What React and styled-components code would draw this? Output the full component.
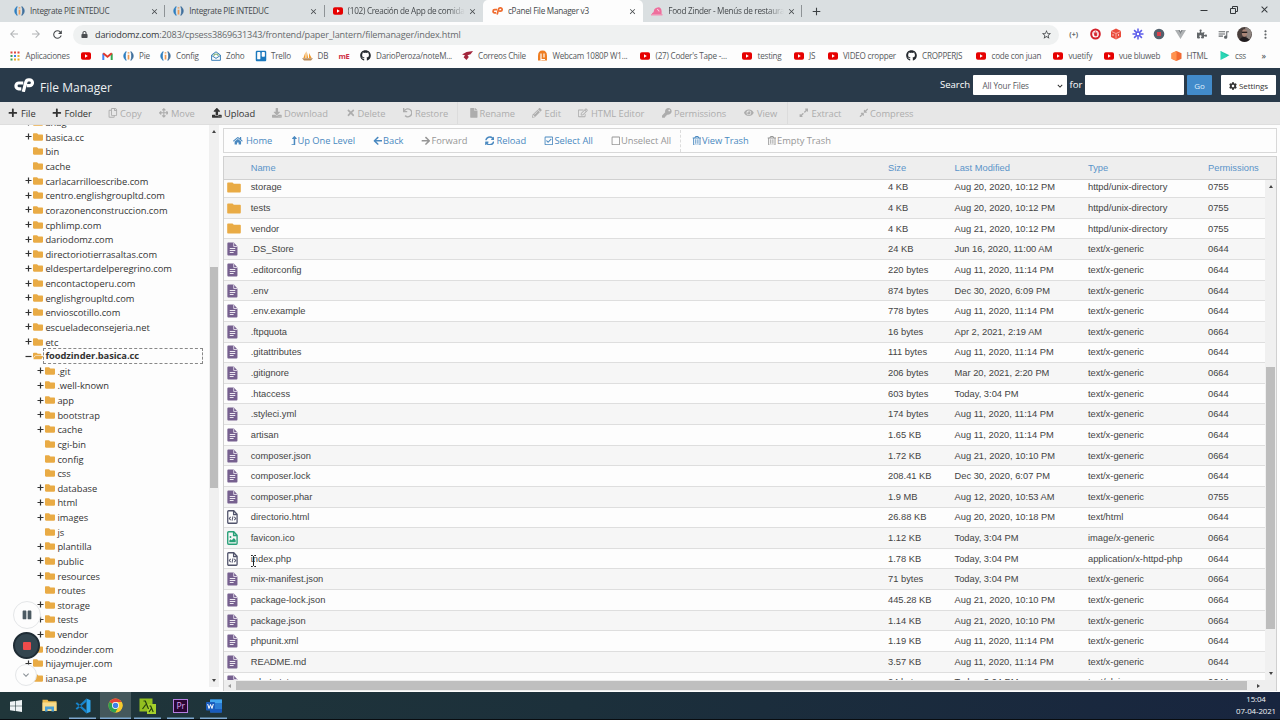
import React from "react";
import styled, { createGlobalStyle, css } from "styled-components";
import {
  FaPlus,
  FaRegCopy,
  FaArrowsAlt,
  FaUpload,
  FaDownload,
  FaTimes,
  FaUndo,
  FaFile,
  FaPencilAlt,
  FaRegEdit,
  FaKey,
  FaEye,
  FaExpandAlt,
  FaCompressAlt,
  FaHome,
  FaLevelUpAlt,
  FaArrowLeft,
  FaArrowRight,
  FaSyncAlt,
  FaRegCheckSquare,
  FaRegSquare,
  FaRegTrashAlt,
  FaCog,
  FaFolder,
  FaFolderOpen,
  FaLock,
  FaGithub,
  FaTrello,
  FaPuzzlePiece,
  FaPause,
} from "react-icons/fa";
import {
  MdArrowBack,
  MdArrowForward,
  MdRefresh,
  MdStarBorder,
  MdQueueMusic,
  MdMoreVert,
  MdClose,
  MdAdd,
  MdKeyboardArrowDown,
} from "react-icons/md";

const GlobalStyle = createGlobalStyle`
  * {
    box-sizing: border-box;
  }
  body {
    margin: 0;
    overflow: hidden;
    background: #fdfdfd;
    font-family: "Open Sans", sans-serif;
  }
  svg {
    display: block;
    flex: none;
  }
`;

const Screen = styled.div`
  position: relative;
  width: 1280px;
  height: 720px;
  display: flex;
  flex-direction: column;
  overflow: hidden;
`;

/* ---------- browser ---------- */

const TabStrip = styled.div`
  height: 22px;
  flex: none;
  display: flex;
  background: #dadfe1;
  padding-left: 5.5px;
`;

const Tab = styled.div`
  width: 159.3px;
  height: 22px;
  display: flex;
  align-items: center;
  padding: 0 6px 0 8.5px;
  border-radius: 5px 5px 0 0;
  background: ${(p) => (p.$active ? "#fdfdfd" : "transparent")};
  color: #45494c;
`;

const TabTitle = styled.div`
  flex: 1;
  margin-left: 5px;
  margin-right: 3px;
  font-size: 8.2px;
  line-height: 12px;
  letter-spacing: -0.28px;
  white-space: nowrap;
  overflow: hidden;
  ${(p) => p.$fade && css`mask-image: linear-gradient(90deg, #000 86%, transparent);`}
`;

const TabDivider = styled.div`
  width: 1px;
  height: 12px;
  margin: 5px -0.5px;
  background: #8e9396;
`;

const NewTab = styled.div`
  margin: 5px 0 0 8.5px;
  color: #3c4043;
`;

const WindowButtons = styled.div`
  margin-left: auto;
  display: flex;
  align-items: center;
  gap: 21.5px;
  height: 19px;
  padding-right: 10px;
`;

const AddressRow = styled.div`
  height: 24px;
  flex: none;
  display: flex;
  align-items: center;
  background: #fdfdfd;
  padding-left: 8px;
`;

const NavIcon = styled.div`
  width: 21.5px;
  color: ${(p) => (p.$dim ? "#b1b4b6" : "#46494c")};
`;

const Omnibox = styled.div`
  width: 986px;
  height: 20px;
  margin-top: 1px;
  display: flex;
  align-items: center;
  padding: 0 7px 0 8px;
  border-radius: 10px;
  background: #eff1f1;
  color: #4b4e51;
`;

const Url = styled.div`
  flex: 1;
  margin-left: 7.5px;
  font-size: 9.1px;
  color: #66696c;
  letter-spacing: -0.165px;
  span {
    color: #33363a;
  }
`;

const Extensions = styled.div`
  display: flex;
  align-items: center;
  margin-left: 4.5px;
`;

const Extension = styled.div`
  width: 21.35px;
  display: flex;
  justify-content: center;
  font-size: 7px;
  font-weight: bold;
  color: #63676a;
`;

const BookmarkBar = styled.div`
  height: 22px;
  flex: none;
  display: flex;
  align-items: center;
  padding: 0 0 3px 9px;
  background: #fdfdfd;
`;

const Bookmark = styled.div`
  width: ${(p) => p.$w}px;
  flex: none;
  display: flex;
  align-items: center;
  gap: 4.5px;
  font-size: 8.1px;
  letter-spacing: -0.22px;
  white-space: nowrap;
  color: #55595c;
`;

const BookmarkIcon = styled.div`
  width: 12px;
  flex: none;
  display: flex;
  justify-content: center;
`;

const Overflow = styled.div`
  font-size: 9px;
  color: #33373a;
`;

const MiniWord = styled.b`
  font-size: 7.5px;
  letter-spacing: -0.4px;
  color: #cf2f45;
`;

/* ---------- file manager ---------- */

const Header = styled.div`
  height: 34px;
  flex: none;
  display: flex;
  align-items: center;
  background: #293a4a;
  color: #fff;
  padding: 0 4px 0 14px;
`;

const HeaderTitle = styled.div`
  margin-left: 6px;
  padding-top: 4px;
  font-size: 12px;
  color: #eef1f3;
  letter-spacing: 0.02px;
`;

const SearchArea = styled.div`
  margin-left: auto;
  display: flex;
  align-items: center;
  height: 20px;
  font-size: 9.6px;
`;

const SearchLabel = styled.span`
  width: ${(p) => p.$w}px;
  padding-bottom: 2px;
  letter-spacing: -0.05px;
`;

const SelectBox = styled.div`
  width: 94px;
  height: 20px;
  margin-right: 3px;
  display: flex;
  align-items: center;
  justify-content: space-between;
  padding: 1px 2px 0 10px;
  border-radius: 1px;
  background: #fff;
  color: #55595c;
  font-size: 8.1px;
  letter-spacing: -0.1px;
`;

const SearchInput = styled.div`
  width: 99.5px;
  height: 20px;
  border-radius: 1px;
  background: #fff;
`;

const GoButton = styled.div`
  width: 25px;
  height: 20px;
  margin: 0 9px 0 3px;
  border-radius: 1px;
  background: #428bca;
  color: #dfeefb;
  font-size: 8px;
  line-height: 21px;
  text-align: center;
`;

const SettingsButton = styled.div`
  width: 55px;
  height: 20px;
  display: flex;
  align-items: center;
  justify-content: center;
  gap: 2px;
  padding-top: 1px;
  border-radius: 1px;
  background: #fff;
  color: #333;
  font-size: 8px;
  letter-spacing: -0.1px;
`;

const Toolbar = styled.div`
  height: 23px;
  flex: none;
  display: flex;
  align-items: center;
  background: #e7e7e7;
  border-bottom: 1px solid #dedede;
  padding-left: 8px;
`;

const ToolItem = styled.div`
  width: ${(p) => p.$w}px;
  flex: none;
  display: flex;
  align-items: center;
  font-size: 9.33px;
  letter-spacing: -0.04px;
  white-space: nowrap;
  color: ${(p) => p.$color};
`;

const ToolIcon = styled.span`
  width: ${(p) => p.$w}px;
  flex: none;
`;

const Divider = styled.div`
  width: 0;
  height: 22px;
  margin-right: 10.5px;
  border-left: 1px ${(p) => (p.$dashed ? "dashed" : "solid")} #dcdcdc;
`;

const Content = styled.div`
  flex: 1;
  min-height: 0;
  display: flex;
  background: #fdfdfd;
`;

const Sidebar = styled.div`
  width: 209px;
  height: 563px;
  overflow: hidden;
  display: flex;
  flex-direction: column;
`;

const TreeRow = styled.div`
  height: 14.64px;
  flex: none;
  display: flex;
  align-items: center;
  padding-left: ${(p) => 24.5 + p.$depth * 12}px;
  color: #333;
  &:first-child {
    margin-top: -10.1px;
  }
`;

const Toggle = styled.span`
  width: 8.3px;
  height: 7px;
  display: flex;
  align-items: center;
`;

const TreeLabel = styled.span`
  height: 14px;
  margin-left: 0.6px;
  padding-left: 1px;
  font-size: 9.33px;
  line-height: 13px;
  letter-spacing: -0.02px;
  white-space: nowrap;
  border: 1px solid transparent;
  ${(p) =>
    p.$selected &&
    css`
      width: 159.5px;
      height: 16px;
      line-height: 14px;
      font-weight: bold;
      letter-spacing: -0.05px;
      border: 1px dashed #888;
    `}
`;

const VScroll = styled.div`
  width: ${(p) => p.$w}px;
  height: ${(p) => p.$h}px;
  flex: none;
  display: flex;
  flex-direction: column;
  align-items: center;
  background: #f0f0f0;
`;

const VThumb = styled.div`
  width: ${(p) => p.$w}px;
  height: ${(p) => p.$h}px;
  margin-top: ${(p) => p.$top}px;
  background: #bdbdbd;
`;

const Arrow = styled.i`
  width: 0;
  height: 0;
  margin: ${(p) => p.$m || 0};
  border: 2.5px solid transparent;
  ${(p) => p.$dir === "up" && "border-top: 0; border-bottom: 3px solid #444;"}
  ${(p) => p.$dir === "down" && "border-bottom: 0; border-top: 3px solid #444;"}
  ${(p) => p.$dir === "left" && "border-left: 0; border-right: 3px solid #999;"}
  ${(p) => p.$dir === "right" && "border-right: 0; border-left: 3px solid #444;"}
`;

const Main = styled.div`
  flex: 1;
  padding: 3px 3px 0 4px;
  display: flex;
  flex-direction: column;
`;

const ActionBar = styled.div`
  height: 25px;
  flex: none;
  display: flex;
  align-items: center;
  padding-left: 9px;
  border: 1px solid #d8d8d8;
`;

const Table = styled.div`
  height: 535px;
  margin-top: 3px;
  flex: none;
  display: flex;
  flex-direction: column;
  border: 1px solid #d0d0d0;
  border-bottom: 0;
  font-family: "Liberation Sans", Arial, sans-serif;
`;

const columns = css`
  display: grid;
  grid-template-columns: 26.7px 637.3px 66.5px 133.5px 120px 1fr;
  align-items: center;
`;

const TableHead = styled.div`
  ${columns}
  height: 23px;
  flex: none;
  background: #eee;
  border-bottom: 1px solid #d0d0d0;
  color: #5b94c9;
  font-size: 9.33px;
`;

const TableBody = styled.div`
  height: 500px;
  flex: none;
  display: flex;
`;

const Rows = styled.div`
  width: 1041px;
  overflow: hidden;
  display: flex;
  flex-direction: column;
`;

const Row = styled.div`
  ${columns}
  height: 20.63px;
  flex: none;
  font-size: 9.33px;
  white-space: nowrap;
  color: #444;
  border-bottom: 1px solid #dedede;
  background: ${(p) => (p.$odd ? "#f6f6f6" : "#fdfdfd")};
  &:first-child {
    margin-top: -2.4px;
  }
`;

const FileIcon = styled.div`
  padding-left: ${(p) => (p.$folder ? 3 : 2.5)}px;
`;

const HScroll = styled.div`
  flex: 1;
  display: flex;
  align-items: center;
  background: #eee;
  padding-left: 4px;
`;

const HThumb = styled.div`
  width: 1011px;
  height: 9px;
  margin: 0 10px 0 5px;
  background: #bfbfbf;
`;

/* ---------- overlays ---------- */

const RoundButton = styled.div`
  position: absolute;
  left: ${(p) => p.$x}px;
  top: ${(p) => p.$y}px;
  width: ${(p) => p.$size}px;
  height: ${(p) => p.$size}px;
  display: flex;
  align-items: center;
  justify-content: center;
  border-radius: 50%;
  background: ${(p) => (p.$dark ? "#33454f" : "#fdfdfd")};
  border: ${(p) => (p.$dark ? "2.5px solid #1f2c35" : "1.5px solid #e4e6e8")};
  color: ${(p) => p.$color || "#4c5a62"};
`;

const StopSquare = styled.div`
  width: 8px;
  height: 8px;
  border-radius: 1px;
  background: #ee4b4b;
`;

const Cursor = styled.svg`
  position: absolute;
  left: 250px;
  top: 555px;
`;

/* ---------- taskbar ---------- */

const Taskbar = styled.div`
  height: 28px;
  flex: none;
  display: flex;
  background: linear-gradient(90deg, #20363a, #1c303b 45%, #18253f);
  border-bottom: 1px solid #080c10;
`;

const TaskItem = styled.div`
  width: ${(p) => p.$w || 32.7}px;
  display: flex;
  align-items: center;
  justify-content: center;
  background: ${(p) => (p.$active ? "#45585c" : "transparent")};
  box-shadow: ${(p) => (p.$open ? "inset 0 -1.5px #7fa9d0" : "none")};
  margin-right: ${(p) => p.$gap || 0}px;
`;

const Clock = styled.div`
  margin-left: auto;
  padding: 1px 4px 0 0;
  font-size: 7.9px;
  line-height: 12px;
  letter-spacing: -0.12px;
  text-align: center;
  color: #f0f3f6;
`;

/* ---------- drawings ---------- */

const AppsIcon = () => (
  <svg width="10" height="10" viewBox="0 0 10 10">
    <path d="M0.5 0.5h2v2h-2zM4 0.5h2v2H4zM7.500.5h2v2h-2z" fill="#e0483e" />
    <path d="M0.5 4h2v2h-2z" fill="#3f9e57" />
    <path d="M4 4h2v2H4z" fill="#4382e6" />
    <path d="M7.500 4h2v2h-2zM4 7.500h2v2H4zM7.500 7.500h2v2h-2z" fill="#e5ae2e" />
    <path d="M0.5 7.500h2v2h-2z" fill="#3f9e57" />
  </svg>
);

const YoutubeIcon = () => (
  <svg width="10" height="8" viewBox="0 0 10 8">
    <rect width="10" height="7.6" y="0.2" rx="1.8" fill="#e60000" />
    <path d="M4 2.3L6.8 4 4 5.7z" fill="#fff" />
  </svg>
);

const PieIcon = () => (
  <svg width="11" height="10" viewBox="0 0 11 10">
    <path d="M3.2 0.6C0 2.5 0 7.5 3.2 9.4 2 6.5 2 3.5 3.2 0.6z" fill="#2f7fc0" stroke="#2f7fc0" strokeWidth="0.8" />
    <path d="M7.8 0.6C11 2.5 11 7.5 7.8 9.4 9 6.5 9 3.5 7.8 0.6z" fill="#3f6f9c" stroke="#3f6f9c" strokeWidth="0.8" />
    <path d="M5.5 1.2v1.3M5.5 3.8v4.6" stroke="#ee9a52" strokeWidth="1.7" />
  </svg>
);

const CpIcon = ({ color, width = 20 }) => (
  <svg width={width} height={width * 0.7} viewBox="0 0 20 14" fill="none" stroke={color} strokeWidth="3.2">
    <path d="M9.300 5H5a2.900 2.900 0 0 0-.3 5.800h2.600" />
    <path d="M9.300 13.800L11.900 4Q12.500 1.800 14.600 1.800h.9a2.900 2.900 0 0 1 0 5.900h-2.600" />
  </svg>
);

const GmailIcon = () => (
  <svg width="11" height="8" viewBox="0 0 11 8" fill="none" strokeWidth="2">
    <path d="M1.3 8V1.5" stroke="#4285f4" />
    <path d="M9.7 8V1.5" stroke="#34a853" />
    <path d="M1.2 1.2l4.3 3.6 4.3-3.6" stroke="#e23a2e" />
  </svg>
);

const MailIcon = () => (
  <svg width="10" height="10" viewBox="0 0 10 10" fill="none" stroke="#3a7fb8">
    <path d="M0.6 4L5 0.8 9.4 4v5.3H0.6z" />
    <path d="M0.8 4.6L5 7.4l4.2-2.8" />
    <path d="M3 5V3.2h4V5" stroke="#6fa66a" />
  </svg>
);

const SailIcon = () => (
  <svg width="11" height="10" viewBox="0 0 11 10">
    <path d="M3.5 1v6H1.4zM4.6 0l1.6 7H4.4zM7 2l2.6 5H7z" fill="#f09a2c" />
    <path d="M0 7.2h11L9 9.4H2z" fill="#b98a58" />
  </svg>
);

const CorreosIcon = () => (
  <svg width="11" height="9" viewBox="0 0 11 9">
    <path d="M0 3.4L4.5 1 11 0 8.6 3.2 5.5 4.2 6.8 6 4.5 9 1.6 6.2 3 4.2z" fill="#a3263c" />
  </svg>
);

const BellIcon = () => (
  <svg width="11" height="11" viewBox="0 0 11 11">
    <path d="M1 10.5V6Q1 .5 5.5.5T10 6v4.5z" fill="#ee7d22" />
    <path d="M4 10.5V3.5M4 9.5h4M7 3.5v4" stroke="#fff" strokeWidth="1.2" />
  </svg>
);

const OrangeBox = () => (
  <svg width="11" height="10" viewBox="0 0 11 10">
    <path d="M5.5 0l5 2.3v5.400l-5 2.300-5-2.300V2.300z" fill="#f26a33" />
    <path d="M0.5 2.3L5.5 0v10l-5-2.3z" fill="#ff9350" />
  </svg>
);

const CssIcon = () => (
  <svg width="10" height="9" viewBox="0 0 10 9">
    <path d="M0.5 0L9.5 4.2 3.5 7z" fill="#22c7a8" />
    <path d="M0.5 0v9l7-3.6z" fill="#2ad6b5" />
  </svg>
);

const FoodIcon = () => (
  <svg width="12" height="9" viewBox="0 0 12 9">
    <path d="M1 6.2Q3 5.8 3 3.5T6.5.4 10.6 4v3H1z" fill="#ee6f9d" />
    <path d="M0 7h11.5v1.5H0z" fill="#f191b4" />
    <path d="M6 2.5a2 2 0 0 1 2 2" stroke="#fbd3e1" fill="none" />
  </svg>
);

const DocIcon = () => (
  <svg width="11" height="14" viewBox="0 0 12 14" preserveAspectRatio="none">
    <path d="M1.4.4h6L11.4 4.4v8.2a1 1 0 0 1-1 1H1.4a1 1 0 0 1-1-1V1.4a1 1 0 0 1 1-1z" fill="#76608f" />
    <path d="M7.3.6v3.9h3.9" stroke="#e9e3f0" strokeWidth="0.9" fill="none" />
    <path d="M3 6.5h6M3 8.5h6M3 10.5h4.200" stroke="#f2eef6" strokeWidth="1" />
  </svg>
);

const CodeIcon = () => (
  <svg width="11" height="14" viewBox="0 0 12 14" preserveAspectRatio="none" fill="none" stroke="#50536b" strokeWidth="1.4">
    <path d="M1.8.8h5.6l3.6 3.6v7.8a1 1 0 0 1-1 1H1.8a1 1 0 0 1-1-1V1.8a1 1 0 0 1 1-1z" />
    <path d="M7.2 1v3.6h3.6" />
    <path d="M4 6.8L2.500 8.500 4 10.200M8 6.800l1.500 1.700L8 10.200M6.500 6.300l-1 4.400" strokeWidth="1.1" />
  </svg>
);

const ImageIcon = () => (
  <svg width="11" height="14" viewBox="0 0 12 14" preserveAspectRatio="none" fill="none" stroke="#27a077" strokeWidth="1.5">
    <path d="M1.8.8h5.6l3.6 3.6v7.8a1 1 0 0 1-1 1H1.8a1 1 0 0 1-1-1V1.8a1 1 0 0 1 1-1z" />
    <path d="M7.2 1v3.6h3.6" />
    <path d="M2.5 11.2V9.5l1.5-1.3 1.2 1 2.3-2.3 2 2v2.3z" fill="#27a077" stroke="none" />
    <circle cx="3.8" cy="6" r="1" fill="#27a077" stroke="none" />
  </svg>
);

const FolderIcon = () => (
  <svg width="14" height="11" viewBox="0 0 14 11">
    <path d="M1 .5h4.5l1.3 1.3H13a.8.8 0 0 1 .8.8v7a.9.9 0 0 1-.9.9H1a.8.8 0 0 1-.8-.8V1.3A.8.8 0 0 1 1 .5z" fill="#e9ab45" />
  </svg>
);

const HexIcon = () => (
  <svg width="12" height="12" viewBox="0 0 12 12">
    <path d="M6 .6l5 2.5v5.8l-5 2.500-5-2.500V3.100z" fill="#ea4c3c" />
    <path d="M1.5 3.5L6 5.5l4.5-2M6 5.500v5.200" stroke="#f7a79e" fill="none" />
    <path d="M3 6v2M8.5 6v2" stroke="#fbc4be" />
  </svg>
);

const LoomIcon = () => (
  <svg width="12" height="12" viewBox="0 0 12 12" stroke="#5b5bea" strokeWidth="1.5">
    <path d="M6 .5v11M.5 6h11M2.1 2.1l7.8 7.8M9.9 2.100L2.100 9.900" />
    <circle cx="6" cy="6" r="1.8" fill="#fff" strokeWidth="1.2" />
  </svg>
);

const OperaIcon = () => (
  <svg width="11" height="12" viewBox="0 0 11 12">
    <ellipse cx="5.5" cy="6" rx="4.3" ry="4.6" fill="#fff" stroke="#d3202a" strokeWidth="2" />
    <path d="M4.200 5.500V3.800M5.500 5.500V3.200M6.800 5.500V3.800M4.200 5.500h2.600v2.300H4.800z" fill="#d3202a" stroke="#d3202a" strokeWidth="0.7" />
  </svg>
);

const RecordIcon = () => (
  <svg width="12" height="12" viewBox="0 0 12 12">
    <circle cx="6" cy="6" r="5.3" fill="#53606c" />
    <rect x="4" y="4" width="4" height="4" fill="#d8404a" />
  </svg>
);

const VueIcon = () => (
  <svg width="11" height="9" viewBox="0 0 11 9">
    <path d="M0 0h3l2.5 4.3L8 0h3L5.5 9z" fill="#aeb1b3" />
    <path d="M3 0h1.7l.8 1.4L6.3 0H8L5.5 4.3z" fill="#7e8386" />
  </svg>
);

const Avatar = () => (
  <svg width="15" height="15" viewBox="0 0 15 15">
    <circle cx="7.5" cy="7.5" r="7.4" fill="#4a3f3c" />
    <path d="M8 .6Q13.500 1 14.600 6.500L13 12l-3 1z" fill="#8f8580" />
    <ellipse cx="7.5" cy="6" rx="2.6" ry="3.8" fill="#a98577" />
    <path d="M4.800 5.300h5.400" stroke="#1d1a1b" strokeWidth="1.3" />
    <path d="M2.500 13Q4 9.500 7.500 10t5 3Q7.500 16.500 2.500 13z" fill="#1f1c1f" />
  </svg>
);

const WindowsIcon = () => (
  <svg width="12" height="12" viewBox="0 0 12 12" fill="#eef3f5">
    <path d="M0 1.8l5-.8v4.7H0zM5.6.9L12 0v5.7H5.6zM0 6.3h5V11l-5-.8zM5.6 6.3H12V12l-6.4-.9z" />
  </svg>
);

const ExplorerIcon = () => (
  <svg width="15" height="13" viewBox="0 0 15 13">
    <path d="M0.5.8h5l1 1.4h8V12H0.5z" fill="#f0bd4e" />
    <path d="M0.5 3.5h14V12H0.5z" fill="#f8dc8c" />
    <path d="M3 12.5V7.5h9v5H9.5v-2.2h-4v2.2z" fill="#4a9fd4" />
  </svg>
);

const CodeEditorIcon = () => (
  <svg width="16" height="16" viewBox="0 0 16 16">
    <path d="M11.5.5L15.5 2.3v11.4l-4 1.8z" fill="#2fa5ec" />
    <path d="M11.7 3.5L2 11.7.6 10.4 11.5.5zM11.7 12.5L2 4.3.6 5.6 11.5 15.5z" fill="#1784cc" />
  </svg>
);

const ChromeIcon = () => (
  <svg width="15" height="15" viewBox="0 0 16 16">
    <circle cx="8" cy="8" r="7.5" fill="#f7c92e" />
    <path d="M8 8L1.5 4.25A7.5 7.5 0 0 1 14.5 4.25H8z" fill="#e2453a" />
    <path d="M8 8L1.5 4.25A7.5 7.5 0 0 0 8 15.5L11.25 9.9z" fill="#2fa04f" />
    <path d="M8 4.25h6.5A7.5 7.5 0 0 1 8 15.5l3.25-5.6z" fill="#f7c92e" />
    <circle cx="8" cy="8" r="3.7" fill="#fff" />
    <circle cx="8" cy="8" r="2.9" fill="#3f7fe8" />
  </svg>
);

const LambdaIcon = () => (
  <svg width="17" height="16" viewBox="0 0 17 16">
    <path d="M0.5.5h13v13h-13z" fill="#93c020" />
    <path d="M8 6h9v10H8z" fill="#a5d02c" />
    <path d="M4.5 3h1.800l3.200 8M6.800 6.500L3.500 11M10.500 8h1.200l2.500 6M12.400 10.500L10 14" stroke="#24400e" strokeWidth="1.2" fill="none" />
  </svg>
);

const PremiereBox = styled.div`
  width: 15px;
  height: 14px;
  border: 1px solid #b57fe0;
  background: #2a0634;
  color: #dda6f5;
  font-size: 8.5px;
  line-height: 11px;
  text-align: center;
`;

const WordIcon = () => (
  <svg width="16" height="14" viewBox="0 0 16 14">
    <rect x="4" y="0.5" width="12" height="13" rx="1" fill="#2b7cd3" />
    <path d="M4 0.5h12v3.5H4z" fill="#41a5ee" />
    <path d="M4 10h12v3.5H4z" fill="#185abd" />
    <rect y="3" width="9" height="8.5" rx="0.8" fill="#1a5dbe" />
    <path d="M1.7 5l1.3 4.5L4.5 5.5 6 9.5 7.3 5" stroke="#fff" strokeWidth="1" fill="none" />
  </svg>
);

const RestoreIcon = () => (
  <svg width="8" height="8" viewBox="0 0 8 8" fill="none" stroke="#33373a">
    <path d="M0.5 2.5h5v5h-5z" />
    <path d="M2.5 2.5v-2h5v5h-2" />
  </svg>
);

const ToggleIcon = ({ open }) => (
  <svg width="7" height="7" viewBox="0 0 7 7" stroke="#333" strokeWidth="1.2">
    <path d={open ? "M0.5 3.5h6" : "M0.5 3.5h6M3.5.5v6"} />
  </svg>
);

/* ---------- data ---------- */

const bookmarks = [
  { icon: <AppsIcon />, text: "Aplicaciones", w: 70.5 },
  { icon: <YoutubeIcon />, w: 21.5 },
  { icon: <GmailIcon />, w: 21.5 },
  { icon: <PieIcon />, text: "Pie", w: 37 },
  { icon: <PieIcon />, text: "Config", w: 50 },
  { icon: <MailIcon />, text: "Zoho", w: 45 },
  { icon: <FaTrello size={12} color="#1a78bd" />, text: "Trello", w: 46.5 },
  { icon: <SailIcon />, text: "DB", w: 37 },
  { icon: <MiniWord>mE</MiniWord>, w: 21.5 },
  { icon: <FaGithub size={11} color="#24292e" />, text: "DarioPeroza/noteM...", w: 102 },
  { icon: <CorreosIcon />, text: "Correos Chile", w: 74.5 },
  { icon: <BellIcon />, text: "Webcam 1080P W1...", w: 103 },
  { icon: <YoutubeIcon />, text: "(27) Coder's Tape -...", w: 102 },
  { icon: <YoutubeIcon />, text: "testing", w: 51.5 },
  { icon: <YoutubeIcon />, text: "JS", w: 34 },
  { icon: <YoutubeIcon />, text: "VIDEO cropper", w: 79 },
  { icon: <FaGithub size={11} color="#24292e" />, text: "CROPPERJS", w: 69.5 },
  { icon: <YoutubeIcon />, text: "code con juan", w: 77 },
  { icon: <YoutubeIcon />, text: "vuetify", w: 50.5 },
  { icon: <YoutubeIcon />, text: "vue bluweb", w: 67.5 },
  { icon: <OrangeBox />, text: "HTML", w: 48.5 },
  { icon: <CssIcon />, text: "css", w: 43 },
];

const tools = [
  { icon: FaPlus, text: "File", w: 44, iw: 13, on: true },
  { icon: FaPlus, text: "Folder", w: 56, iw: 12.5, on: true },
  { icon: FaRegCopy, text: "Copy", w: 50.5, iw: 12 },
  { icon: FaArrowsAlt, text: "Move", w: 53.5, iw: 12.5 },
  { icon: FaUpload, text: "Upload", w: 60, iw: 12, on: true },
  { icon: FaDownload, text: "Download", w: 74, iw: 12 },
  { icon: FaTimes, text: "Delete", w: 56.5, iw: 11.5 },
  { icon: FaUndo, text: "Restore", w: 54.5, iw: 12.5 },
  { divider: true },
  { icon: FaFile, text: "Rename", w: 63.5, iw: 11 },
  { icon: FaPencilAlt, text: "Edit", w: 46, iw: 12.5 },
  { icon: FaRegEdit, text: "HTML Editor", w: 84, iw: 13 },
  { icon: FaKey, text: "Permissions", w: 82, iw: 12 },
  { icon: FaEye, text: "View", w: 43, iw: 13 },
  { divider: true },
  { icon: FaExpandAlt, text: "Extract", w: 60, iw: 13 },
  { icon: FaCompressAlt, text: "Compress", w: 70, iw: 11.5 },
];

const actions = [
  { icon: FaHome, text: "Home", w: 56, iw: 13, on: true },
  { icon: FaLevelUpAlt, text: "Up One Level", w: 83.5, iw: 8.5, on: true },
  { icon: FaArrowLeft, text: "Back", w: 48.5, iw: 10.5, on: true },
  { icon: FaArrowRight, text: "Forward", w: 63.5, iw: 10.5 },
  { icon: FaSyncAlt, text: "Reload", w: 59, iw: 12, on: true },
  { icon: FaRegCheckSquare, text: "Select All", w: 67, iw: 11, on: true },
  { icon: FaRegSquare, text: "Unselect All", w: 69.5, iw: 10.5 },
  { divider: true },
  { icon: FaRegTrashAlt, text: "View Trash", w: 75, iw: 10.5, on: true },
  { icon: FaRegTrashAlt, text: "Empty Trash", w: 80, iw: 10.5 },
];

// [name, depth, has children, selected]
const tree = [
  ["anag", 0, true],
  ["basica.cc", 0, true],
  ["bin", 0, false],
  ["cache", 0, false],
  ["carlacarrilloescribe.com", 0, true],
  ["centro.englishgroupltd.com", 0, true],
  ["corazonenconstruccion.com", 0, true],
  ["cphlimp.com", 0, true],
  ["dariodomz.com", 0, true],
  ["directoriotierrasaltas.com", 0, true],
  ["eldespertardelperegrino.com", 0, true],
  ["encontactoperu.com", 0, true],
  ["englishgroupltd.com", 0, true],
  ["envioscotillo.com", 0, true],
  ["escueladeconsejeria.net", 0, true],
  ["etc", 0, true],
  ["foodzinder.basica.cc", 0, true, true],
  [".git", 1, true],
  [".well-known", 1, true],
  ["app", 1, true],
  ["bootstrap", 1, true],
  ["cache", 1, true],
  ["cgi-bin", 1, false],
  ["config", 1, false],
  ["css", 1, false],
  ["database", 1, true],
  ["html", 1, true],
  ["images", 1, true],
  ["js", 1, false],
  ["plantilla", 1, true],
  ["public", 1, true],
  ["resources", 1, true],
  ["routes", 1, false],
  ["storage", 1, true],
  ["tests", 1, true],
  ["vendor", 1, true],
  ["foodzinder.com", 0, true],
  ["hijaymujer.com", 0, true],
  ["ianasa.pe", 0, true],
];

const DIR = "httpd/unix-directory";
const TXT = "text/x-generic";

const files = [
  ["storage", "4 KB", "Aug 20, 2020, 10:12 PM", DIR, "0755"],
  ["tests", "4 KB", "Aug 20, 2020, 10:12 PM", DIR, "0755"],
  ["vendor", "4 KB", "Aug 21, 2020, 10:12 PM", DIR, "0755"],
  [".DS_Store", "24 KB", "Jun 16, 2020, 11:00 AM", TXT, "0644"],
  [".editorconfig", "220 bytes", "Aug 11, 2020, 11:14 PM", TXT, "0644"],
  [".env", "874 bytes", "Dec 30, 2020, 6:09 PM", TXT, "0644"],
  [".env.example", "778 bytes", "Aug 11, 2020, 11:14 PM", TXT, "0644"],
  [".ftpquota", "16 bytes", "Apr 2, 2021, 2:19 AM", TXT, "0664"],
  [".gitattributes", "111 bytes", "Aug 11, 2020, 11:14 PM", TXT, "0644"],
  [".gitignore", "206 bytes", "Mar 20, 2021, 2:20 PM", TXT, "0664"],
  [".htaccess", "603 bytes", "Today, 3:04 PM", TXT, "0644"],
  [".styleci.yml", "174 bytes", "Aug 11, 2020, 11:14 PM", TXT, "0644"],
  ["artisan", "1.65 KB", "Aug 11, 2020, 11:14 PM", TXT, "0644"],
  ["composer.json", "1.72 KB", "Aug 21, 2020, 10:10 PM", TXT, "0664"],
  ["composer.lock", "208.41 KB", "Dec 30, 2020, 6:07 PM", TXT, "0644"],
  ["composer.phar", "1.9 MB", "Aug 12, 2020, 10:53 AM", TXT, "0755"],
  ["directorio.html", "26.88 KB", "Aug 20, 2020, 10:18 PM", "text/html", "0644"],
  ["favicon.ico", "1.12 KB", "Today, 3:04 PM", "image/x-generic", "0664"],
  ["index.php", "1.78 KB", "Today, 3:04 PM", "application/x-httpd-php", "0644"],
  ["mix-manifest.json", "71 bytes", "Today, 3:04 PM", TXT, "0664"],
  ["package-lock.json", "445.28 KB", "Aug 21, 2020, 10:10 PM", TXT, "0664"],
  ["package.json", "1.14 KB", "Aug 21, 2020, 10:10 PM", TXT, "0664"],
  ["phpunit.xml", "1.19 KB", "Aug 11, 2020, 11:14 PM", TXT, "0644"],
  ["README.md", "3.57 KB", "Aug 11, 2020, 11:14 PM", TXT, "0644"],
  ["robots.txt", "24 bytes", "Today, 3:04 PM", "text/plain", "0644"],
];

const iconFor = (name, type) => {
  if (type === DIR) return <FolderIcon />;
  if (type === "text/html" || name.endsWith(".php")) return <CodeIcon />;
  if (type.startsWith("image")) return <ImageIcon />;
  return <DocIcon />;
};

const ToolList = ({ items, onColor, offColor, dashed }) =>
  items.map((item, i) => {
    if (item.divider) return <Divider key={i} $dashed={dashed} />;
    const Icon = item.icon;
    return (
      <ToolItem key={i} $w={item.w} $color={item.on ? onColor : offColor}>
        <ToolIcon $w={item.iw}>
          <Icon size={9.7} />
        </ToolIcon>
        {item.text}
      </ToolItem>
    );
  });

const Browser = () => (
  <>
    <TabStrip>
      <Tab>
        <PieIcon />
        <TabTitle>Integrate PIE INTEDUC</TabTitle>
        <MdClose size={9} />
      </Tab>
      <TabDivider />
      <Tab>
        <PieIcon />
        <TabTitle>Integrate PIE INTEDUC</TabTitle>
        <MdClose size={9} />
      </Tab>
      <TabDivider />
      <Tab>
        <YoutubeIcon />
        <TabTitle $fade>(102) Creación de App de comida</TabTitle>
        <MdClose size={9} />
      </Tab>
      <Tab $active>
        <CpIcon color="#ef6c2f" width={11} />
        <TabTitle>cPanel File Manager v3</TabTitle>
        <MdClose size={9} />
      </Tab>
      <Tab>
        <FoodIcon />
        <TabTitle $fade>Food Zinder - Menús de restaurantes</TabTitle>
        <MdClose size={9} />
      </Tab>
      <TabDivider />
      <NewTab>
        <MdAdd size={13} />
      </NewTab>
      <WindowButtons>
        <svg width="8" height="8" viewBox="0 0 8 8" stroke="#33373a">
          <path d="M0.5 4.5h7" />
        </svg>
        <RestoreIcon />
        <MdClose size={11} color="#33373a" />
      </WindowButtons>
    </TabStrip>
    <AddressRow>
      <NavIcon $dim>
        <MdArrowBack size={12} />
      </NavIcon>
      <NavIcon $dim>
        <MdArrowForward size={12} />
      </NavIcon>
      <NavIcon>
        <MdRefresh size={13} />
      </NavIcon>
      <Omnibox>
        <FaLock size={7} />
        <Url>
          <span>dariodomz.com</span>:2083/cpsess3869631343/frontend/paper_lantern/filemanager/index.html
        </Url>
        <MdStarBorder size={11} />
      </Omnibox>
      <Extensions>
        <Extension>{"(+)"}</Extension>
        <Extension><OperaIcon /></Extension>
        <Extension><HexIcon /></Extension>
        <Extension><LoomIcon /></Extension>
        <Extension><RecordIcon /></Extension>
        <Extension><VueIcon /></Extension>
        <Extension><FaPuzzlePiece size={10} /></Extension>
        <Extension><MdQueueMusic size={13} /></Extension>
        <Extension><Avatar /></Extension>
        <Extension><MdMoreVert size={13} /></Extension>
      </Extensions>
    </AddressRow>
    <BookmarkBar>
      {bookmarks.map((b, i) => (
        <Bookmark key={i} $w={b.w}>
          <BookmarkIcon>{b.icon}</BookmarkIcon>
          {b.text}
        </Bookmark>
      ))}
      <Overflow>»</Overflow>
    </BookmarkBar>
  </>
);

const App = () => (
  <Screen>
    <GlobalStyle />
    <Browser />
    <Header>
      <CpIcon color="#fff" />
      <HeaderTitle>File Manager</HeaderTitle>
      <SearchArea>
        <SearchLabel $w={32.5}>Search</SearchLabel>
        <SelectBox>
          All Your Files
          <MdKeyboardArrowDown size={10} color="#222" />
        </SelectBox>
        <SearchLabel $w={15}>for</SearchLabel>
        <SearchInput />
        <GoButton>Go</GoButton>
        <SettingsButton>
          <FaCog size={8} />
          Settings
        </SettingsButton>
      </SearchArea>
    </Header>
    <Toolbar>
      <ToolList items={tools} onColor="#333" offColor="#adadad" />
    </Toolbar>
    <Content>
      <Sidebar>
        {tree.map(([name, depth, children, selected], i) => (
          <TreeRow key={i} $depth={depth}>
            <Toggle>{children && <ToggleIcon open={selected} />}</Toggle>
            {selected ? <FaFolderOpen size={10} color="#e9ab45" /> : <FaFolder size={10} color="#e9ab45" />}
            <TreeLabel $selected={selected}>{name}</TreeLabel>
          </TreeRow>
        ))}
      </Sidebar>
      <VScroll $w={10} $h={562}>
        <Arrow $dir="up" $m="4.5px 0 0" />
        <VThumb $w={8} $h={221} $top={134} />
        <Arrow $dir="down" $m="auto 0 5px" />
      </VScroll>
      <Main>
        <ActionBar>
          <ToolList items={actions} onColor="#4a89c0" offColor="#969696" dashed />
        </ActionBar>
        <Table>
          <TableHead>
            <span />
            <span>Name</span>
            <span>Size</span>
            <span>Last Modified</span>
            <span>Type</span>
            <span>Permissions</span>
          </TableHead>
          <TableBody>
            <Rows>
              {files.map(([name, size, modified, type, perms], i) => (
                <Row key={name} $odd={i % 2 === 1}>
                  <FileIcon $folder={type === DIR}>{iconFor(name, type)}</FileIcon>
                  <span>{name}</span>
                  <span>{size}</span>
                  <span>{modified}</span>
                  <span>{type}</span>
                  <span>{perms}</span>
                </Row>
              ))}
            </Rows>
            <VScroll $w={11} $h={500}>
              <Arrow $dir="up" $m="4.5px 0 0" />
              <VThumb $w={9} $h={262} $top={179} />
              <Arrow $dir="down" $m="auto 0 5px" />
            </VScroll>
          </TableBody>
          <HScroll>
            <Arrow $dir="left" />
            <HThumb />
            <Arrow $dir="right" />
          </HScroll>
        </Table>
      </Main>
    </Content>
    <Taskbar>
      <TaskItem>
        <WindowsIcon />
      </TaskItem>
      <TaskItem $w={34} $gap={2.5}>
        <ExplorerIcon />
      </TaskItem>
      <TaskItem $w={27} $gap={3.5} $open>
        <CodeEditorIcon />
      </TaskItem>
      <TaskItem $w={31} $gap={3.5} $open $active>
        <ChromeIcon />
      </TaskItem>
      <TaskItem $w={27} $gap={6} $open>
        <LambdaIcon />
      </TaskItem>
      <TaskItem $w={27} $gap={6} $open>
        <PremiereBox>Pr</PremiereBox>
      </TaskItem>
      <TaskItem $w={27} $open>
        <WordIcon />
      </TaskItem>
      <Clock>
        15:04
        <br />
        07-04-2021
      </Clock>
    </Taskbar>
    <RoundButton $x={13} $y={601} $size={28}>
      <FaPause size={10} />
    </RoundButton>
    <RoundButton $x={13} $y={632} $size={27} $dark>
      <StopSquare />
    </RoundButton>
    <RoundButton $x={15} $y={664} $size={22} $color="#8a9196">
      <MdKeyboardArrowDown size={12} />
    </RoundButton>
    <Cursor width="7" height="12" viewBox="0 0 7 12" stroke="#222" fill="none">
      <path d="M1 .5h1.5l1 1 1-1H6M3.5 1.5v9M1 11.5h1.5l1-1 1 1H6M2.5 6.5h2" />
    </Cursor>
  </Screen>
);

export default App;
